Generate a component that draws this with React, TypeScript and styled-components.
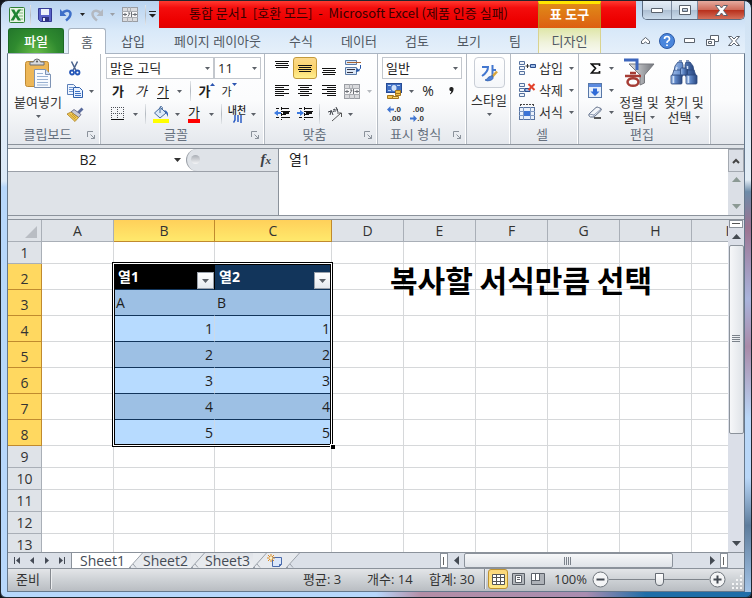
import React from "react";
import styled, { createGlobalStyle, css } from "styled-components";

const Global = createGlobalStyle`
  *, *::before, *::after { box-sizing: border-box; }
  html, body { margin: 0; background: #12161c; }
  body, button, input, select {
    font-family: "Open Sans", "Noto Sans CJK KR", sans-serif;
    font-size: 13px;
    line-height: 16px;
    color: #1e1e1e;
  }
  button { background: none; border: 0; padding: 0; margin: 0; }
  svg { display: block; flex: none; }
`;

/* ---------- window ---------- */

const Frame = styled.main`
  display: flex;
  flex-direction: column;
  min-height: 100vh;
  height: 100vh;
  border: 1px solid #20262e;
  border-radius: 8px 8px 6px 6px;
  overflow: hidden;
  padding: 0 6px 5px;
  background:
    linear-gradient(90deg, #b7d7fb 50%, #b48ea6 56%, #a98db0 78%, #1f6ea8 86%, #1f6ea8) bottom / 100% 5px no-repeat,
    linear-gradient(#cfe2f4, #e3edf6 30%, #6d8ba8 32%, #9b7391 38%, #a9b4dc 50%, #a98aa8 58%, #b9d7f8 70%, #b9d7f8 80%, #5d7c9c 88%, #a9c9ec) right / 6px 100% no-repeat,
    linear-gradient(#b9d3ef 0, #d9e9f9 30px, #e6f0fa 53px, #dbe9f8 180px, #b7d7fb 186px);
`;

const TitleBar = styled.header`
  display: flex;
  height: 27px;
  flex: none;
`;

const QuickAccess = styled.div`
  display: flex;
  align-items: center;
  width: 152px;
  flex: none;
  padding-left: 2px;
`;

const IconButton = styled.button<{ $w?: number; $on?: boolean }>`
  display: flex;
  align-items: center;
  justify-content: center;
  width: ${(p) => p.$w ?? 22}px;
  height: 22px;
  flex: none;
  ${(p) =>
    p.$on &&
    css`
      border: 1px solid #c29a3c;
      border-radius: 3px;
      background: linear-gradient(#fcd98a, #fbd36c 50%, #fff08f);
    `}
`;

const TitleText = styled.h1`
  flex: 1;
  min-width: 0;
  margin: 0;
  overflow: hidden;
  white-space: pre;
  text-align: center;
  font-family: "Noto Sans CJK KR", sans-serif;
  font-size: 13px;
  font-weight: 400;
  line-height: 24px;
  color: #3a0000;
  background: linear-gradient(#ff3a30, #f40d0d 25%, #ee0000 70%, #e00000);
`;

const ContextTitle = styled.div`
  width: 63px;
  flex: none;
  border: solid #b98a1c;
  border-width: 0 1px;
  border-top: 3px solid #ffe500;
  background: linear-gradient(#e08a18, #dd5f12);
  color: #fff;
  font-weight: 700;
  line-height: 20px;
  text-align: center;
`;

const RedTail = styled.div`
  width: 35px;
  flex: none;
  background: linear-gradient(#ff3a30, #f40d0d 25%, #ee0000 70%, #e00000);
`;

const WindowButtons = styled.div`
  display: flex;
  flex: none;
  height: 19px;
  margin-left: 6px;
  border: 1px solid #5b6b80;
  border-top: 0;
  border-radius: 0 0 5px 5px;
  overflow: hidden;
`;

const WindowButton = styled.button<{ $w: number; $close?: boolean }>`
  display: flex;
  align-items: center;
  justify-content: center;
  width: ${(p) => p.$w}px;
  border-right: 1px solid #7c8ba0;
  background: linear-gradient(#e6eef7, #cfdbe8 48%, #adbfd3 52%, #cbdcec);
  ${(p) =>
    p.$close &&
    css`
      border-right: 0;
      background: linear-gradient(#e6ab9f, #cf6c5b 48%, #b8301c 52%, #d5705a);
    `}
`;

const TabBar = styled.nav`
  display: flex;
  height: 25px;
  flex: none;
  padding-left: 1px;
`;

const Tab = styled.button<{ $w: number; $kind?: "file" | "active" | "context" }>`
  width: ${(p) => p.$w}px;
  flex: none;
  white-space: nowrap;
  line-height: 24px;
  color: #505862;
  ${(p) =>
    p.$kind === "file" &&
    css`
      margin-right: 4px;
      border: 1px solid #1c6a24;
      border-bottom: 0;
      border-radius: 3px 3px 0 0;
      background: radial-gradient(ellipse at 50% 110%, #6cc04a, #2f8a2f 60%, #23772b);
      color: #fff;
      font-weight: 500;
    `}
  ${(p) =>
    p.$kind === "active" &&
    css`
      position: relative;
      z-index: 1;
      margin-bottom: -1px;
      border: 1px solid #a9b4c2;
      border-bottom: 0;
      border-radius: 3px 3px 0 0;
      background: #fff;
    `}
  ${(p) =>
    p.$kind === "context" &&
    css`
      margin-left: 3px;
      border: solid #d9d38f;
      border-width: 0 1px;
      background: linear-gradient(#dfe6a8, #f0f3dc 60%, #f8f9f2);
    `}
`;

const TabTools = styled.div`
  display: flex;
  align-items: center;
  margin-left: auto;
`;

const Content = styled.div`
  display: flex;
  flex-direction: column;
  flex: 1;
  min-height: 0;
  border: 1px solid #66788c;
  border-top-color: #a9b4c2;
  background: #dfe3e8;
`;

/* ---------- ribbon ---------- */

const Ribbon = styled.div`
  display: flex;
  height: 91px;
  flex: none;
  overflow: hidden;
  border-bottom: 1px solid #8b929b;
  background: linear-gradient(#fff, #fbfcfd 50%, #e5e8ed);
`;

const Group = styled.section<{ $w: number }>`
  display: flex;
  flex-direction: column;
  width: ${(p) => p.$w}px;
  flex: none;
  padding-top: 3px;
  border-right: 1px solid #b5bbc3;
  box-shadow: inset -1px 0 #fff;
`;

const GroupBody = styled.div<{ $pad?: number }>`
  display: flex;
  height: 69px;
  padding-left: ${(p) => p.$pad ?? 5}px;
`;

const GroupLabel = styled.h2`
  display: flex;
  align-items: center;
  justify-content: center;
  margin: 0;
  padding-right: 5px;
  font-size: 13px;
  font-weight: 400;
  line-height: 17px;
  color: #66707e;

  span { flex: 1; text-align: center; }
`;

const Rows = styled.div<{ $tight?: boolean }>`
  display: flex;
  flex-direction: column;
  gap: ${(p) => (p.$tight ? 0 : 1)}px;
`;

const Row = styled.div`
  display: flex;
  align-items: center;
  height: 22px;
`;

const Divider = styled.span<{ $w: number }>`
  width: ${(p) => p.$w}px;
  height: 20px;
  flex: none;
  background: linear-gradient(#e4e7ea, #b3b9c0, #e4e7ea) center / 1px 100% no-repeat;
`;

const BigButton = styled.button<{ $w: number }>`
  display: flex;
  flex-direction: column;
  align-items: center;
  width: ${(p) => p.$w}px;
  flex: none;
  white-space: nowrap;
  line-height: 15px;
  color: #333;

  > svg:first-child { margin: 1px 0 7px; }
  > svg:last-child { margin-top: 5px; }
`;

const Line = styled.span`
  display: flex;
  align-items: center;
  gap: 4px;
`;

const Mark = styled.span`
  align-self: flex-start;
  padding-top: 3px;
`;

const StyleTile = styled.span`
  display: flex;
  align-items: center;
  justify-content: center;
  width: 31px;
  height: 31px;
  margin-bottom: 5px;
  border: 1px solid #c9ced6;
  border-radius: 4px;
  background: linear-gradient(#fff, #f4f6f9);
`;

const LabelButton = styled.button`
  display: flex;
  align-items: center;
  gap: 3px;
  height: 22px;
  white-space: nowrap;
  color: #333;
`;

const SelectBox = styled.label<{ $w: number }>`
  display: block;
  position: relative;
  width: ${(p) => p.$w}px;
  height: 22px;

  select {
    appearance: none;
    width: 100%;
    height: 22px;
    padding: 0 0 0 3px;
    border: 1px solid #c3c7cd;
    border-radius: 0;
    background: #fff;
    line-height: 18px;
  }
  svg {
    position: absolute;
    right: 4px;
    top: 10px;
    pointer-events: none;
  }
`;

const Ga = styled.span<{ $v?: "bold" | "italic" | "under" | "small" | "color" }>`
  font-size: 13px;
  line-height: 15px;
  ${(p) => p.$v === "bold" && "font-weight: 700;"}
  ${(p) => p.$v === "italic" && "font-style: italic;"}
  ${(p) => p.$v === "under" && "text-decoration: underline; text-underline-offset: 2px;"}
  ${(p) => p.$v === "small" && "font-size: 11px;"}
  ${(p) => p.$v === "color" && "border-bottom: 4px solid #f00; line-height: 14px;"}
`;

const Phonetic = styled.span`
  display: flex;
  flex-direction: column;
  align-items: center;
  font-size: 10px;
  font-weight: 500;
  line-height: 10px;
`;

const Symbol = styled.span`
  font-size: 14px;
  line-height: 16px;
  color: #222;
`;

const Decimal = styled.span`
  display: flex;
  flex-direction: column;
  font-family: "Liberation Sans", sans-serif;
  font-size: 8px;
  font-weight: 700;
  line-height: 9px;
  color: #333;

  > span { display: flex; align-items: center; justify-content: flex-end; }
`;

/* ---------- formula bar ---------- */

const FormulaBar = styled.div`
  display: flex;
  height: 68px;
  flex: none;
  margin-top: 3px;
  border: solid #8b929b;
  border-width: 1px 0;
`;

const NameArea = styled.div`
  width: 271px;
  flex: none;
  border-right: 1px solid #8b929b;
`;

const NameRow = styled.div`
  display: flex;
  height: 23px;
  border-bottom: 1px solid #9ba0a8;
  background: #fff;
`;

const NameInput = styled.input`
  width: 160px;
  padding: 0;
  border: 0;
  background: none;
  font-size: 14px;
  text-align: center;
`;

const FxArea = styled.div`
  display: flex;
  align-items: center;
  justify-content: space-between;
  flex: 1;
  padding: 0 7px 2px 4px;
  border-left: 1px solid #9ba0a8;
  border-radius: 12px 0 0 12px;
  background: #dfe3e8;

  i {
    font-family: "Liberation Serif", serif;
    font-size: 15px;
    font-weight: 700;
    color: #3b3f45;
  }
  small { font-size: 11px; }
`;

const Knob = styled.span`
  width: 9px;
  height: 9px;
  border-radius: 50%;
  background: linear-gradient(#a9aeb5, #f4f5f7);
`;

const FormulaInput = styled.input`
  flex: 1;
  min-width: 0;
  align-self: stretch;
  padding: 0 10px 44px;
  border: 0;
  background: #fff;
  font-size: 14px;
`;

const FormulaScroll = styled.div`
  display: flex;
  flex-direction: column;
  align-items: center;
  justify-content: space-between;
  width: 16px;
  flex: none;
  padding-bottom: 6px;
  background: #dbdfe6;
`;

const ExpandButton = styled.button`
  display: flex;
  align-items: center;
  justify-content: center;
  width: 16px;
  height: 23px;
  margin-bottom: 5px;
  border: 1px solid #a4a9b1;
`;

/* ---------- sheet ---------- */

const SheetArea = styled.div`
  display: flex;
  flex: 1;
  min-height: 0;
  margin-top: 3px;
  border-top: 1px solid #8b929b;
`;

const SheetView = styled.div`
  position: relative;
  flex: 1;
  min-width: 0;
  overflow: hidden;
  background: #fff;
`;

const Grid = styled.table`
  width: 756px;
  table-layout: fixed;
  border-collapse: separate;
  border-spacing: 0;
  font-size: 14px;
  line-height: 18px;
`;

const HeadCell = styled.th<{ $on?: boolean; $row?: boolean }>`
  height: 22px;
  padding: 0;
  overflow: hidden;
  border: solid ${(p) => (p.$on ? "#c08a2e" : "#a9afb7")};
  border-width: 0 1px 1px 0;
  font-weight: 400;
  line-height: 20px;
  text-align: center;
  vertical-align: bottom;
  color: #333;
  background: ${(p) =>
    p.$on ? (p.$row ? "#ffd860" : "linear-gradient(#ffd05a, #ffe96c)") : "#dfe3e8"};
`;

const Corner = styled(HeadCell)`
  svg { margin: 0 4px 3px auto; }
`;

const Cell = styled.td<{ $fill?: string; $num?: boolean; $bold?: boolean }>`
  height: 22px;
  padding: 0 1px 0 2px;
  overflow: hidden;
  border: solid #d6d8da;
  border-width: 0 1px 1px 0;
  white-space: nowrap;
  ${(p) => p.$num && "text-align: right;"}
  ${(p) =>
    p.$fill &&
    css`
      background: ${p.$fill};
      border-bottom-color: #12355b;
      border-right-color: ${p.$fill === "#b7dbff" ? "#cdd9e6" : p.$fill};
    `}
  ${(p) => p.$bold && "color: #fff; font-weight: 700; padding: 0 0 0 4px;"}
`;

const TallRow = styled.tr`
  > * { height: 26px; }
`;

const HeaderContent = styled.div`
  display: flex;
  justify-content: space-between;
  height: 25px;
  padding-top: 4px;
`;

const FilterButton = styled.button`
  display: flex;
  align-items: center;
  justify-content: center;
  width: 17px;
  height: 17px;
  margin-top: 4px;
  border: 1px solid #9aa1ab;
  background: linear-gradient(#fff, #e6e9ee);
`;

const Selection = styled.div`
  position: absolute;
  left: 104px;
  top: 42px;
  width: 221px;
  height: 185px;
  border: 1px solid #000;
  box-shadow: inset 0 0 0 1px #fff, inset 0 0 0 2px #000;
  pointer-events: none;

  &::after {
    content: "";
    position: absolute;
    right: -3px;
    bottom: -3px;
    width: 5px;
    height: 5px;
    border: solid #fff;
    border-width: 1px 0 0 1px;
    background: #000;
  }
`;

const Caption = styled.div`
  position: absolute;
  left: 382px;
  top: 39px;
  font-family: "Noto Sans CJK KR", sans-serif;
  font-size: 30px;
  font-weight: 700;
  line-height: 40px;
  color: #000;
  white-space: nowrap;
`;

const VScroll = styled.div`
  display: flex;
  flex-direction: column;
  align-items: center;
  width: 16px;
  flex: none;
  background: #dbdfe8;
`;

const VTrack = styled.div`
  flex: 1;
  height: 0;
  display: flex;
  flex-direction: column;
`;

const SplitBox = styled.div`
  width: 14px;
  height: 8px;
  padding: 2px;
  border: 1px solid #8b929b;
  background: #fff;
  &::after { content: ""; display: block; border-top: 1px solid #555; }
`;

const ArrowBox = styled.button`
  display: flex;
  align-items: center;
  justify-content: center;
  width: 16px;
  height: 17px;
  flex: none;
`;

const VThumb = styled.div`
  display: flex;
  align-items: center;
  justify-content: center;
  width: 15px;
  height: 65%;
  border: 1px solid #8b929b;
  border-radius: 2px;
  background: linear-gradient(90deg, #f6f7f9, #dfe3e8);
`;

const SheetBar = styled.div`
  display: flex;
  height: 16px;
  flex: none;
  border-top: 1px solid #8b929b;
  background: #dbe0e8;
`;

const NavButtons = styled.div`
  display: flex;
  align-items: center;
  width: 64px;
  flex: none;
  padding-left: 1px;
  border-right: 1px solid #8b929b;

  button { display: flex; justify-content: center; width: 15px; }
`;

const SheetTab = styled.button<{ $active?: boolean }>`
  flex: none;
  width: ${(p) => (p.$active ? 57 : 48)}px;
  padding-left: ${(p) => (p.$active ? 8 : 0)}px;
  font-size: 14px;
  line-height: 14px;
  text-align: left;
  white-space: nowrap;
  color: #444b55;
  background: ${(p) => (p.$active ? "#fff" : "linear-gradient(#e0e3e8, #eef0f3)")};
`;

const NewSheet = styled.button`
  display: flex;
  width: 19px;
  flex: none;
  padding-top: 1px;
  background: #e7eaee;
`;

const HScroll = styled.div`
  display: flex;
  align-items: center;
  width: 288px;
  flex: none;
  margin-left: auto;
  margin-right: 16px;
`;

const SplitBar = styled.span`
  width: 8px;
  height: 15px;
  flex: none;
  padding: 3px 0 0 2px;
  border: 1px solid #8b929b;
  background: #fff;
  &::after { content: ""; display: block; height: 8px; border-left: 1px solid #666; }
`;

const HTrack = styled.div`
  flex: 1;
  height: 15px;
`;

const HThumb = styled.div`
  display: flex;
  align-items: center;
  justify-content: center;
  width: 87%;
  height: 15px;
  border: 1px solid #8b929b;
  border-radius: 2px;
  background: linear-gradient(#f6f7f9, #dfe3e8);
`;

/* ---------- status bar ---------- */

const StatusBar = styled.footer`
  display: flex;
  align-items: center;
  height: 23px;
  flex: none;
  padding: 0 0 2px 8px;
  border-top: 1px solid #8b929b;
  background: linear-gradient(#e3e5e8, #cdd1d5 50%, #b9bdc2);
  white-space: nowrap;
  color: #333;
`;

const StatusSep = styled.span`
  width: 2px;
  height: 20px;
  flex: none;
  border-left: 1px solid #85898f;
  border-right: 1px solid #eceef0;
`;

const Stat = styled.span<{ $w: number }>`
  width: ${(p) => p.$w}px;
  flex: none;
`;

const ViewButtons = styled.div`
  display: flex;
  flex: none;
  margin: 0 6px 0 2px;
`;

const ViewButton = styled.button<{ $on?: boolean }>`
  display: flex;
  align-items: center;
  justify-content: center;
  width: 20px;
  height: 20px;
  flex: none;
  ${(p) =>
    p.$on &&
    css`
      border: 1px solid #bf922f;
      border-radius: 3px;
      background: linear-gradient(#fbd67a, #ffe987);
    `}
`;

const Zoom = styled.input`
  appearance: none;
  width: 100px;
  height: 16px;
  flex: none;
  margin: 0;
  background: linear-gradient(#7f858c, #7f858c) center / 100% 1px no-repeat;

  &::-webkit-slider-thumb {
    appearance: none;
    width: 9px;
    height: 13px;
    border: 1px solid #666c74;
    border-radius: 1px 1px 5px 5px;
    background: linear-gradient(#fff, #e2e4e7);
  }
`;

const Spacer = styled.span`
  flex: 1;
`;

/* ---------- icons ---------- */

type ArrowProps = { dir?: "down" | "up" | "left" | "right"; size?: number; color?: string };

const Arrow = ({ dir = "down", size = 5, color = "#5c6168" }: ArrowProps) => {
  const h = Math.ceil(size / 2);
  const vertical = dir === "down" || dir === "up";
  const d = {
    down: `M0 0H${size}L${size / 2} ${h}Z`,
    up: `M0 ${h}H${size}L${size / 2} 0Z`,
    left: `M${h} 0V${size}L0 ${size / 2}Z`,
    right: `M0 0V${size}L${h} ${size / 2}Z`,
  }[dir];
  return (
    <svg width={vertical ? size : h} height={vertical ? h : size} fill={color}>
      <path d={d} />
    </svg>
  );
};

const DropButton = ({ label, color }: { label: string; color?: string }) => (
  <IconButton $w={10} aria-label={label}>
    <Arrow color={color} />
  </IconButton>
);

const DropArrowBox = styled.span`
  padding-left: 3px;
`;

const DropArrow = () => (
  <DropArrowBox>
    <Arrow />
  </DropArrowBox>
);

const Launcher = () => (
  <svg width="8" height="8" fill="none" stroke="#8b929b">
    <path d="M.5 6V.5H6M3.5 3.5l4 4M7.5 4v3.5H4" />
  </svg>
);

const ExcelIcon = () => (
  <svg width="16" height="16">
    <rect x=".5" y=".5" width="15" height="15" rx="1" fill="#e9f5e4" stroke="#2f8136" />
    <path d="M10 3h4M10 6h4M10 9h4M10 12h4" stroke="#7bb87b" />
    <path d="M2 2.500h3.300L7 5.700 9 2.500h3L8.500 7.800 12 13.500H8.800L6.800 10l-2 3.500H1.500l3.600-5.700Z" fill="#1f8433" />
  </svg>
);

const SaveIcon = () => (
  <svg width="14" height="14">
    <path d="M.5.5h13v13h-11l-2-2Z" fill="#5a63c8" stroke="#343a94" />
    <path d="M3 1h8v6H3Z" fill="#eef2fb" />
    <path d="M4 9h7v4.500H4Z" fill="#2d3180" />
    <path d="M5 10h2v3H5Z" fill="#e6e9f7" />
  </svg>
);

const UndoIcon = ({ color, flip }: { color: string; flip?: boolean }) => (
  <svg width="14" height="14" viewBox="0 0 14 14">
    <g transform={flip ? "matrix(-1 0 0 1 14 0)" : undefined}>
      <path d="M3 5.500C5.500 2.500 10 1.500 11.200 4.500S9.500 10.500 7 12.500" fill="none" stroke={color} strokeWidth="2.500" />
      <path d="M1 1v7h6.500Z" fill={color} />
    </g>
  </svg>
);

const MergeIcon = () => (
  <svg width="16" height="15">
    <rect x=".5" y=".5" width="15" height="14" fill="#d9dadd" stroke="#9a9da3" />
    <path d="M0 4.500h16M0 10.500h16M8.500 0v4M5.500 11v4M10.500 11v4M5.500 0v4" stroke="#aaadb2" />
    <rect x="1" y="5" width="14" height="5" fill="#f7f7f8" />
    <path d="M1 7.500h4M15 7.500h-4M3 6v3M13 6v3M6 6h2L6 9.500M9.500 5v5M9.500 7.500h1" stroke="#6d7076" fill="none" />
  </svg>
);

const PasteIcon = () => (
  <svg width="27" height="30">
    <rect x=".5" y="3.500" width="23" height="25" rx="2" fill="#edb758" stroke="#bf8b35" />
    <path d="M5 7V4h3.500Q9 1 12 1t3.500 3H19v3Z" fill="#d8dade" stroke="#6a6d73" />
    <circle cx="12" cy="3.500" r="1" fill="#555" />
    <path d="M9.500 11.500h11l5 5v13h-16Z" fill="#f8fbff" stroke="#7e94b5" />
    <path d="M20.500 11.500v5h5" fill="#d4e2f3" stroke="#7e94b5" />
    <path d="M12 15.500h6M12 18.500h11M12 21.500h11M12 24.500h11M12 27h11" stroke="#9ab2d2" />
  </svg>
);

const CutIcon = () => (
  <svg width="12" height="15" fill="none">
    <path d="m2.500.5 4.500 9M8.500.5 4 9.500" stroke="#49618c" strokeWidth="1.500" />
    <circle cx="3" cy="11.500" r="2" stroke="#2456b8" strokeWidth="1.800" />
    <circle cx="8.500" cy="11.500" r="2" stroke="#2456b8" strokeWidth="1.800" />
  </svg>
);

const CopyIcon = () => (
  <svg width="16" height="14">
    <path d="M.5.5h6l3 3v7h-9Z" fill="#eef5ff" stroke="#5b7fb8" />
    <path d="M2 3.500h4M2 5.500h4M2 7.500h4" stroke="#6f95d0" />
    <path d="M6.500 3.500h6l3 3v7h-9Z" fill="#e8f1ff" stroke="#2d5eab" />
    <path d="M8 7.500h5M8 9.500h6M8 11.500h6" stroke="#3f73c4" />
  </svg>
);

const BrushIcon = () => (
  <svg width="17" height="15">
    <path d="m10 5 4.500-4.500 2 2L12 7Z" fill="#586a9b" />
    <path d="m7 2.500 7 5-2.500 3L4 5Z" fill="#c9cad6" stroke="#55587a" strokeWidth=".8" />
    <path d="m4 5 7.500 5.500L8 14.500 0 7Z" fill="#f3cb55" stroke="#a87f24" strokeWidth=".8" />
    <path d="m2.500 7 6 5.500M5 7l4 4" stroke="#b98926" strokeWidth=".8" />
  </svg>
);

const BorderIcon = () => (
  <svg width="14" height="14" fill="none" stroke="#4d5158">
    <path d="M.5 0v12M6.500 0v12M12.500 0v12M0 .5h13M0 6.500h13" strokeDasharray="1 1" />
    <path d="M0 12.500h13" stroke="#111" />
  </svg>
);

const FillIcon = () => (
  <svg width="17" height="17">
    <path d="M7.500 1.500 13 7l-6 5-5.500-5Z" fill="#dbe9f9" stroke="#456a9c" />
    <path d="M7 7V1.500Q7 0 8.500.5T9 4" fill="none" stroke="#456a9c" />
    <path d="M11 4q5 1 4 7l-2-4Z" fill="#2f62b4" />
    <path d="M0 13h16v4H0Z" fill="#ff0" />
  </svg>
);

const ALIGN = {
  left: [0, 0],
  center: [0, 2],
  right: [0, 5],
};

const V_OFFSET = { top: 0, middle: 4, bottom: 7 };

const VAlignIcon = ({ at }: { at: "top" | "middle" | "bottom" }) => (
  <svg width="14" height="15" fill="#111">
    {[0, 1, 2, 3].map((i) => (
      <rect key={i} x={i % 2} y={V_OFFSET[at] + i * 2} width={i % 2 ? 12 : 14} height="1" />
    ))}
  </svg>
);

const AlignIcon = ({ kind }: { kind: "left" | "center" | "right" }) => (
  <svg width="14" height="12" fill="#111">
    {[0, 1, 2, 3, 4, 5].map((i) => (
      <rect key={i} x={ALIGN[kind][i % 2]} y={i * 2} width={i % 2 ? 9 : 14} height="1" />
    ))}
  </svg>
);

const IndentIcon = ({ out }: { out?: boolean }) => (
  <svg width="16" height="14">
    <path d="M7 1.500h8M7 4.500h9M7 7.500h5M7 10.500h9M2 1.500h3M2 10.500h3" stroke="#111" />
    <path d="M9 5h6v2H9Z" fill="#111" />
    <path d="M7.500 0v14" stroke="#111" strokeDasharray="1 1" />
    <path d={out ? "M0 6 4 3v2h3v2H4v2Z" : "M7 6 3 3v2H0v2h3v2Z"} fill="#3d7be0" />
  </svg>
);

const WrapIcon = () => (
  <svg width="17" height="16">
    <path d="M.5.5h11v4H.5ZM.5 7.500h11v7H.5Z" fill="#dbe7f6" stroke="#5b7aa6" />
    <path d="M2 2.500h14" stroke="#a86433" />
    <path d="M2 9.500h8M2 12.500h6" stroke="#334" />
    <path d="M15.500 5v3.500L12.500 11" stroke="#2456a8" fill="none" />
    <path d="m11 12 1-4 3 3Z" fill="#2456a8" />
  </svg>
);

const OrientIcon = () => (
  <svg width="17" height="15" fill="none" stroke="#3e4248">
    <path d="m1 5 3-1-1 4M4 3l2 5M5.500 5 7 4M6 3l2-1v3M9 0l2 5M9.500 3 11 2" />
    <path d="m5 14 9-8M10 6h4.500v4" stroke="#555" />
  </svg>
);

const CurrencyIcon = () => (
  <svg width="17" height="16">
    <rect x=".5" y=".5" width="15" height="9" fill="#3f6fc4" stroke="#274b94" />
    <path d="M2 2.500h3M2 7.500h3M11 2.500h3" stroke="#bcd2f4" />
    <ellipse cx="8" cy="5" rx="2.500" ry="3" fill="#cfe0f8" />
    <path d="M9.500 7.500h5v5h-5ZM1.500 12.500h6v3h-6Z" fill="#f2c24a" stroke="#a4761c" />
    <path d="M9 10.500h6M6.500 13.500h6v2h-6Z" stroke="#a4761c" fill="#f9db7c" />
  </svg>
);

const CommaIcon = () => (
  <svg width="5" height="8" fill="#222">
    <path d="M2.500 0A2 2 0 0 1 4.500 2.500Q4.500 5.500 1 7.500V6.500Q2.300 5.500 2.300 4.200A2 2 0 0 1 2.500 0Z" />
  </svg>
);

const BlueArrow = ({ right }: { right?: boolean }) => (
  <svg width="7" height="7">
    <path d={right ? "M7 3.500 3.500 0v2.500H0v2h3.500V7Z" : "M0 3.500 3.500 0v2.500H7v2H3.500V7Z"} fill="#3f74d0" />
  </svg>
);

const StylesIcon = () => (
  <svg width="18" height="18" fill="none">
    <path d="M2 3h6q0 5-6 9M12.500 1v11M12.500 6H16" stroke="#4377cf" strokeWidth="2" />
    <path d="M17 7.500 12 13" stroke="#d8a53b" strokeWidth="2.500" />
    <path d="M12.500 11.500q2 4-2.500 5-3 1-5-.5 3-1 3.500-3Z" fill="#4e82d6" stroke="#2a58a8" strokeWidth=".7" />
  </svg>
);

const CellsIcon = ({ kind }: { kind: "insert" | "delete" | "format" }) =>
  kind === "format" ? (
    <svg width="17" height="16">
      <rect x=".5" y="3.500" width="15" height="12" fill="#eaf1fb" stroke="#56729f" />
      <path d="M0 7.500h16M0 11.500h16M4.500 3v13M11.500 3v13" stroke="#7f9ac4" />
      <rect x="5" y="7" width="6" height="5" fill="#3c74d6" />
      <path d="M1 .5h14M1.500 0v2M14.500 0v2" stroke="#444" strokeDasharray="2 1" />
    </svg>
  ) : (
    <svg width="17" height="14" fill="#eef3fa" stroke="#56729f">
      <path d="M.5.5h5v3h-5ZM.5 5.500h5v3h-5ZM.5 10.500h5v3h-5Z" />
      {kind === "insert" ? (
        <>
          <path d="M11.500 3.500h5v3h-5Z" fill="#9dbbe8" stroke="#2b4d8c" />
          <path d="M6.500 5h4M8.500 3v4" stroke="#333" />
        </>
      ) : (
        <>
          <path d="M6 5.500h5v3H6Z" fill="#9dbbe8" stroke="#2b4d8c" />
          <path d="m9.500 1 6 6M15.500 1l-6 6" stroke="#e2412b" strokeWidth="2" />
        </>
      )}
    </svg>
  );

const SigmaIcon = () => (
  <svg width="11" height="11" fill="none" stroke="#111" strokeWidth="1.700">
    <path d="M9.500 3V1H1.500L5.500 5.200 1.500 10h8V8" />
  </svg>
);

const FillDownIcon = () => (
  <svg width="14" height="15">
    <rect x=".5" y=".5" width="13" height="14" fill="#e6effb" stroke="#5878a8" />
    <path d="M1 1h12v3H1Z" fill="#5b8be0" />
    <path d="M5 5.500h4v3h2.500L7 13 2.500 8.500H5Z" fill="#2f6bd8" />
  </svg>
);

const EraserIcon = () => (
  <svg width="15" height="13">
    <path d="M1 8 8 1.500q1-1 2.500 0l2.500 1q1 1 0 2L6 11H2.500Q0 10 1 8Z" fill="#f3f5f9" stroke="#5e6c86" />
    <path d="m1 8 5 1 7-6M6 9v2" fill="none" stroke="#8b98b1" />
    <path d="M6 12h7" stroke="#222" strokeWidth="1.300" />
  </svg>
);

const SortIcon = () => (
  <svg width="31" height="30" fill="none">
    <defs>
      <linearGradient id="funnel">
        <stop offset="0" stopColor="#e4e5e7" />
        <stop offset="1" stopColor="#72757b" />
      </linearGradient>
    </defs>
    <path d="M5 6h25L20.500 17v8L16 27V17Z" fill="url(#funnel)" stroke="#77797e" />
    <path d="M0 2h13v10" stroke="#3d66bd" strokeWidth="3" />
    <path d="M6 15h6M1 18h16" stroke="#a63d35" strokeWidth="2.500" />
    <ellipse cx="9" cy="24" rx="5.500" ry="3.800" stroke="#a63d35" strokeWidth="2.500" />
  </svg>
);

const FindIcon = () => (
  <svg width="28" height="30">
    <defs>
      <linearGradient id="lens">
        <stop offset="0" stopColor="#9dbbe8" />
        <stop offset=".4" stopColor="#6088c8" />
        <stop offset="1" stopColor="#28467f" />
      </linearGradient>
    </defs>
    <g fill="url(#lens)" stroke="#2b477c" strokeWidth=".8">
      <path d="M8 4h4l1 3v6H4l1-5ZM16 4h4l3 4 1 5h-9V7Z" />
      <path d="M4 12h9v6H2ZM15 12h9l2 6H15Z" />
      <rect x="10.500" y="10" width="7" height="7" rx="1" />
      <rect x="1" y="17" width="11" height="9" rx="1" />
      <rect x="16" y="17" width="11" height="9" rx="1" />
    </g>
    <path d="M9 3h3M16 3h3" stroke="#7d93bb" strokeWidth="2" />
    <path d="M3.500 18v7M18.500 18v7M7 9l-1 3M17.500 8v3" stroke="#cfe0f8" strokeWidth="1.500" />
  </svg>
);

const HelpIcon = () => (
  <svg width="16" height="16">
    <circle cx="8" cy="8" r="7.500" fill="#4a86dc" stroke="#2c5aa6" />
    <path d="M5.500 6Q5.500 3.500 8 3.500T10.500 6Q10.500 7.200 9 8 8 8.500 8 10M8 11.500v1.500" fill="none" stroke="#fff" strokeWidth="1.700" />
  </svg>
);

const GrayGlyph = ({ d, w, h }: { d: string; w: number; h: number }) => (
  <svg width={w} height={h} fill="#fff" stroke="#5a626d">
    <path d={d} />
  </svg>
);

const Slant = ({ left, right }: { left: string; right: string }) => (
  <svg width="14" height="15">
    <path d="M0 0h14L1 15H0Z" fill={left} />
    <path d="M14 0v15H1Z" fill={right} />
    <path d="M13.500 0 .5 14.500H0M0 14.500h2M4 11l3 3.500" stroke="#9aa0a9" fill="none" />
  </svg>
);

const NewSheetIcon = () => (
  <svg width="16" height="13">
    <path d="M5.500 3.500h9v7l-2 2h-7Z" fill="#dbe7fa" stroke="#4a6bac" />
    <path d="M12.500 12.500v-2h2" fill="#4a6bac" stroke="#4a6bac" />
    <path d="M4 0v8M0 4h8M1 1l6 6M7 1 1 7" stroke="#dc8b22" />
    <circle cx="4" cy="4" r="1.500" fill="#fff3c4" />
  </svg>
);

const Grip = ({ vertical }: { vertical?: boolean }) => (
  <svg width="8" height="8" stroke="#7b828b">
    <path d={vertical ? "M0 .5h8M0 2.500h8M0 4.500h8M0 6.500h8" : "M.5 0v8M2.500 0v8M4.500 0v8M6.500 0v8"} />
  </svg>
);

const RoundIcon = ({ plus }: { plus?: boolean }) => (
  <svg width="17" height="17">
    <circle cx="8.500" cy="8.500" r="7.500" fill="#f4f5f6" stroke="#6e747b" />
    <path d={plus ? "M4.500 8.500h8M8.500 4.500v8" : "M4.500 8.500h8"} stroke="#444a52" strokeWidth="2" />
  </svg>
);

const ResizeGrip = () => (
  <svg width="18" height="20" fill="#f4f5f6">
    <path d="M14 6h2v2h-2ZM10 10h2v2h-2ZM14 10h2v2h-2ZM6 14h2v2H6ZM10 14h2v2h-2ZM14 14h2v2h-2ZM6 18h2v2H6ZM10 18h2v2h-2ZM14 18h2v2h-2Z" />
  </svg>
);

/* ---------- data ---------- */

const COLUMNS = ["A", "B", "C", "D", "E", "F", "G", "H", "I"];
const WIDTHS: Record<string, number> = { B: 101, C: 117 };
const TABS: [string, number][] = [
  ["삽입", 54],
  ["페이지 레이아웃", 115],
  ["수식", 52],
  ["데이터", 64],
  ["검토", 52],
  ["보기", 52],
  ["팀", 40],
];
const DATA: Record<number, [string, string]> = {
  2: ["열1", "열2"],
  3: ["A", "B"],
  4: ["1", "1"],
  5: ["2", "2"],
  6: ["3", "3"],
  7: ["4", "4"],
  8: ["5", "5"],
};
const ROWS = Array.from({ length: 13 }, (_, i) => i + 1);

const DataCell = ({ row, col }: { row: number; col: string }) => {
  const values = DATA[row];
  if (!values || (col !== "B" && col !== "C")) return <Cell />;
  const value = values[col === "B" ? 0 : 1];
  if (row === 2)
    return (
      <Cell $bold $fill={col === "B" ? "#000" : "#12355b"}>
        <HeaderContent>
          {value}
          <FilterButton aria-label={`${value} 필터`}>
            <Arrow size={7} />
          </FilterButton>
        </HeaderContent>
      </Cell>
    );
  return (
    <Cell $num={row > 3} $fill={row % 2 ? "#9dc0e4" : "#b7dbff"}>
      {value}
    </Cell>
  );
};

const SheetRow = ({ row }: { row: number }) => {
  const filled = row in DATA;
  const cells = (
    <>
      <HeadCell $row $on={filled}>{row}</HeadCell>
      {COLUMNS.map((c) => (
        <DataCell key={c} row={row} col={c} />
      ))}
    </>
  );
  return filled ? <TallRow>{cells}</TallRow> : <tr>{cells}</tr>;
};

const Label = ({ text, launcher }: { text: string; launcher?: boolean }) => (
  <GroupLabel>
    <span>{text}</span>
    {launcher && <Launcher />}
  </GroupLabel>
);

const Combo = ({ label, value, w }: { label: string; value: string; w: number }) => (
  <SelectBox $w={w}>
    <select aria-label={label} defaultValue={value}>
      <option>{value}</option>
    </select>
    <Arrow />
  </SelectBox>
);

export default function App() {
  return (
    <>
      <Global />
      <Frame>
        <TitleBar>
          <QuickAccess>
            <ExcelIcon />
            <Divider $w={10} />
            <IconButton $w={20} aria-label="저장"><SaveIcon /></IconButton>
            <IconButton aria-label="실행 취소"><UndoIcon color="#3e6fc8" /></IconButton>
            <DropButton label="실행 취소 목록" color="#222" />
            <IconButton $w={20} aria-label="다시 실행"><UndoIcon color="#b3b8c0" flip /></IconButton>
            <DropButton label="다시 실행 목록" color="#9a9fa6" />
            <IconButton $w={26} aria-label="병합"><MergeIcon /></IconButton>
            <Divider $w={4} />
            <IconButton $w={11} aria-label="빠른 실행 도구 모음 사용자 지정">
              <svg width="7" height="7" fill="#222"><path d="M0 0h7v1H0ZM0 3h7L3.500 6.500Z" /></svg>
            </IconButton>
          </QuickAccess>
          <TitleText>{"통합 문서1  [호환 모드]  -  Microsoft Excel (제품 인증 실패)"}</TitleText>
          <ContextTitle>표 도구</ContextTitle>
          <RedTail />
          <WindowButtons>
            <WindowButton $w={29} aria-label="최소화">
              <GrayGlyph w={12} h={5} d="M.5.5h11v4H.5Z" />
            </WindowButton>
            <WindowButton $w={26} aria-label="최대화">
              <GrayGlyph w={12} h={10} d="M.5.5h11v9H.5ZM3.500 3.500v3h5v-3Z" />
            </WindowButton>
            <WindowButton $w={46} $close aria-label="닫기">
              <GrayGlyph w={13} h={11} d="M.5.5h4l2 2.500 2-2.500h4l-4 5 4 5h-4l-2-2.500-2 2.500h-4l4-5Z" />
            </WindowButton>
          </WindowButtons>
        </TitleBar>

        <TabBar>
          <Tab $w={56} $kind="file">파일</Tab>
          <Tab $w={38} $kind="active">홈</Tab>
          {TABS.map(([name, w]) => (
            <Tab key={name} $w={w}>{name}</Tab>
          ))}
          <Tab $w={63} $kind="context">디자인</Tab>
          <TabTools>
            <IconButton aria-label="리본 메뉴 최소화">
              <GrayGlyph w={9} h={7} d="m.5 4 4-3.500 4 3.500v2.500h-2L4.500 5l-2 1.500h-2Z" />
            </IconButton>
            <IconButton aria-label="도움말"><HelpIcon /></IconButton>
            <IconButton $w={23} aria-label="창 최소화">
              <GrayGlyph w={11} h={5} d="M.5.5h10v4H.5Z" />
            </IconButton>
            <IconButton aria-label="창 복원">
              <GrayGlyph w={13} h={11} d="M4.500.5h8v6h-4v4h-8v-6h4ZM4.500 4.500h4v2M2.500 6.500h3v2h-3Z" />
            </IconButton>
            <IconButton aria-label="창 닫기">
              <GrayGlyph w={12} h={10} d="M.5.5h3l2.500 2.500L8.500.5h3l-4 4.500 4 4.500h-3L6 7 3.500 9.500h-3l4-4.500Z" />
            </IconButton>
          </TabTools>
        </TabBar>

        <Content>
          <Ribbon>
            <Group $w={93}>
              <GroupBody $pad={4}>
                <BigButton $w={52}>
                  <PasteIcon />
                  붙여넣기
                  <Arrow />
                </BigButton>
                <Rows>
                  <Row><IconButton aria-label="잘라내기"><CutIcon /></IconButton></Row>
                  <Row>
                    <IconButton aria-label="복사"><CopyIcon /></IconButton>
                    <DropButton label="복사 옵션" />
                  </Row>
                  <Row><IconButton aria-label="서식 복사"><BrushIcon /></IconButton></Row>
                </Rows>
              </GroupBody>
              <Label text="클립보드" launcher />
            </Group>

            <Group $w={164}>
              <GroupBody>
                <Rows>
                  <Row>
                    <Combo label="글꼴" value="맑은 고딕" w={108} />
                    <Combo label="글꼴 크기" value="11" w={47} />
                  </Row>
                  <Row>
                    <IconButton $w={24} aria-label="굵게"><Ga $v="bold">가</Ga></IconButton>
                    <IconButton aria-label="기울임꼴"><Ga $v="italic">가</Ga></IconButton>
                    <IconButton aria-label="밑줄"><Ga $v="under">가</Ga></IconButton>
                    <DropButton label="밑줄 옵션" />
                    <Divider $w={12} />
                    <IconButton aria-label="글꼴 크기 크게">
                      <Ga $v="bold">가</Ga><Mark><Arrow dir="up" color="#2c55b0" /></Mark>
                    </IconButton>
                    <IconButton aria-label="글꼴 크기 작게">
                      <Ga $v="small">가</Ga><Mark><Arrow color="#2c55b0" /></Mark>
                    </IconButton>
                  </Row>
                  <Row>
                    <IconButton $w={24} aria-label="테두리"><BorderIcon /></IconButton>
                    <DropButton label="테두리 옵션" />
                    <Divider $w={10} />
                    <IconButton aria-label="채우기 색"><FillIcon /></IconButton>
                    <DropButton label="채우기 색 옵션" />
                    <IconButton $w={24} aria-label="글꼴 색"><Ga $v="color">가</Ga></IconButton>
                    <DropButton label="글꼴 색 옵션" />
                    <Divider $w={10} />
                    <IconButton aria-label="윗주">
                      <Phonetic>
                        내천
                        <svg width="9" height="8" fill="none" stroke="#2b5cc4" strokeWidth="1.500">
                          <path d="M2 0v5L.5 7.500M5 0v7M8 0v8" />
                        </svg>
                      </Phonetic>
                    </IconButton>
                    <DropButton label="윗주 옵션" />
                  </Row>
                </Rows>
              </GroupBody>
              <Label text="글꼴" launcher />
            </Group>

            <Group $w={113}>
              <GroupBody>
                <Rows>
                  <Row>
                    <IconButton $w={23} aria-label="위쪽 맞춤"><VAlignIcon at="top" /></IconButton>
                    <IconButton $w={24} $on aria-label="가운데 맞춤"><VAlignIcon at="middle" /></IconButton>
                    <IconButton $w={23} aria-label="아래쪽 맞춤"><VAlignIcon at="bottom" /></IconButton>
                    <IconButton $w={26} aria-label="텍스트 줄 바꿈"><WrapIcon /></IconButton>
                  </Row>
                  <Row>
                    <IconButton $w={23} aria-label="왼쪽"><AlignIcon kind="left" /></IconButton>
                    <IconButton $w={24} aria-label="가운데"><AlignIcon kind="center" /></IconButton>
                    <IconButton $w={23} aria-label="오른쪽"><AlignIcon kind="right" /></IconButton>
                    <IconButton $w={24} aria-label="병합하고 가운데 맞춤"><MergeIcon /></IconButton>
                    <DropButton label="병합 옵션" color="#b5b9be" />
                  </Row>
                  <Row>
                    <IconButton $w={23} aria-label="내어쓰기"><IndentIcon out /></IconButton>
                    <IconButton $w={23} aria-label="들여쓰기"><IndentIcon /></IconButton>
                    <Divider $w={6} />
                    <IconButton $w={26} aria-label="방향"><OrientIcon /></IconButton>
                    <Arrow />
                  </Row>
                </Rows>
              </GroupBody>
              <Label text="맞춤" launcher />
            </Group>

            <Group $w={89}>
              <GroupBody $pad={4}>
                <Rows>
                  <Row><Combo label="표시 형식" value="일반" w={80} /></Row>
                  <Row>
                    <IconButton $w={24} aria-label="회계 표시 형식"><CurrencyIcon /></IconButton>
                    <DropButton label="회계 옵션" />
                    <IconButton $w={24} aria-label="백분율"><Symbol>%</Symbol></IconButton>
                    <IconButton aria-label="쉼표"><CommaIcon /></IconButton>
                  </Row>
                  <Row>
                    <IconButton $w={24} aria-label="자릿수 늘림">
                      <Decimal><span><BlueArrow />.0</span><span>.00</span></Decimal>
                    </IconButton>
                    <IconButton aria-label="자릿수 줄임">
                      <Decimal><span>.00</span><span><BlueArrow right />.0</span></Decimal>
                    </IconButton>
                  </Row>
                </Rows>
              </GroupBody>
              <Label text="표시 형식" launcher />
            </Group>

            <Group $w={44}>
              <GroupBody $pad={2}>
                <BigButton $w={40}>
                  <StyleTile><StylesIcon /></StyleTile>
                  스타일
                  <Arrow />
                </BigButton>
              </GroupBody>
            </Group>

            <Group $w={68}>
              <GroupBody $pad={8}>
                <Rows $tight>
                  <LabelButton><CellsIcon kind="insert" />삽입<DropArrow /></LabelButton>
                  <LabelButton><CellsIcon kind="delete" />삭제<DropArrow /></LabelButton>
                  <LabelButton><CellsIcon kind="format" />서식<DropArrow /></LabelButton>
                </Rows>
              </GroupBody>
              <Label text="셀" />
            </Group>

            <Group $w={132}>
              <GroupBody>
                <Rows $tight>
                  <Row><IconButton aria-label="합계"><SigmaIcon /></IconButton><DropButton label="합계 옵션" /></Row>
                  <Row><IconButton aria-label="채우기"><FillDownIcon /></IconButton><DropButton label="채우기 옵션" /></Row>
                  <Row><IconButton aria-label="지우기"><EraserIcon /></IconButton><DropButton label="지우기 옵션" /></Row>
                </Rows>
                <BigButton $w={46}>
                  <SortIcon />
                  <span>정렬 및</span>
                  <Line>필터 <Arrow /></Line>
                </BigButton>
                <BigButton $w={44}>
                  <FindIcon />
                  <span>찾기 및</span>
                  <Line>선택 <Arrow /></Line>
                </BigButton>
              </GroupBody>
              <Label text="편집" />
            </Group>
          </Ribbon>

          <FormulaBar>
            <NameArea>
              <NameRow>
                <NameInput aria-label="이름 상자" defaultValue="B2" />
                <IconButton $w={18} aria-label="이름 목록"><Arrow size={7} color="#333" /></IconButton>
                <FxArea><Knob /><i>f<small>x</small></i></FxArea>
              </NameRow>
            </NameArea>
            <FormulaInput aria-label="수식 입력줄" defaultValue="열1" />
            <FormulaScroll>
              <ExpandButton aria-label="수식 입력줄 축소">
                <svg width="8" height="6" fill="none" stroke="#444" strokeWidth="2"><path d="m1 5 3-3 3 3" /></svg>
              </ExpandButton>
              <Arrow dir="up" size={9} color="#8b9994" />
              <Spacer />
              <Arrow size={9} color="#8b9994" />
            </FormulaScroll>
          </FormulaBar>

          <SheetArea>
            <SheetView>
              <Grid>
                <colgroup>
                  <col width="34" />
                  {COLUMNS.map((c) => (
                    <col key={c} width={WIDTHS[c] ?? 72} />
                  ))}
                </colgroup>
                <thead>
                  <tr>
                    <Corner>
                      <svg width="12" height="12" fill="#b9bdc3"><path d="M12 0v12H0Z" /></svg>
                    </Corner>
                    {COLUMNS.map((c) => (
                      <HeadCell key={c} $on={c === "B" || c === "C"}>{c}</HeadCell>
                    ))}
                  </tr>
                </thead>
                <tbody>
                  {ROWS.map((r) => (
                    <SheetRow key={r} row={r} />
                  ))}
                </tbody>
              </Grid>
              <Selection />
              <Caption>복사할 서식만큼 선택</Caption>
            </SheetView>
            <VScroll>
              <SplitBox />
              <ArrowBox aria-label="위로"><Arrow dir="up" size={9} color="#444a52" /></ArrowBox>
              <VTrack>
                <VThumb><Grip vertical /></VThumb>
              </VTrack>
              <ArrowBox aria-label="아래로"><Arrow size={9} color="#444a52" /></ArrowBox>
            </VScroll>
          </SheetArea>

          <SheetBar>
            <NavButtons>
              <button aria-label="첫 시트"><svg width="6" height="7" fill="#444a55"><path d="M0 0h1v7H0ZM6 0v7L2 3.500Z" /></svg></button>
              <button aria-label="이전 시트"><Arrow dir="left" size={7} color="#444a55" /></button>
              <button aria-label="다음 시트"><Arrow dir="right" size={7} color="#444a55" /></button>
              <button aria-label="마지막 시트"><svg width="6" height="7" fill="#444a55"><path d="M5 0h1v7H5ZM0 0v7l4-3.500Z" /></svg></button>
            </NavButtons>
            <SheetTab $active>Sheet1</SheetTab>
            <Slant left="#fff" right="#e7eaee" />
            <SheetTab>Sheet2</SheetTab>
            <Slant left="#e7eaee" right="#e7eaee" />
            <SheetTab>Sheet3</SheetTab>
            <Slant left="#e7eaee" right="#e7eaee" />
            <NewSheet aria-label="워크시트 삽입"><NewSheetIcon /></NewSheet>
            <Slant left="#e7eaee" right="#dbe0e8" />
            <HScroll>
              <SplitBar />
              <ArrowBox aria-label="왼쪽으로"><Arrow dir="left" size={9} color="#444a52" /></ArrowBox>
              <HTrack><HThumb><Grip /></HThumb></HTrack>
              <ArrowBox aria-label="오른쪽으로"><Arrow dir="right" size={9} color="#444a52" /></ArrowBox>
              <SplitBar />
            </HScroll>
          </SheetBar>

          <StatusBar>
            <Stat $w={34}>준비</Stat>
            <StatusSep />
            <Spacer />
            <Stat $w={64}>평균: 3</Stat>
            <Stat $w={62}>개수: 14</Stat>
            <Stat $w={55}>합계: 30</Stat>
            <StatusSep />
            <ViewButtons>
              <ViewButton $on aria-label="기본">
                <svg width="13" height="11" fill="#fff" stroke="#555"><path d="M.5.5h12v10H.5ZM0 3.500h13M0 7.500h13M4.500 0v11M8.500 0v11" /></svg>
              </ViewButton>
              <ViewButton aria-label="페이지 레이아웃">
                <svg width="13" height="12" fill="#b4b8bd" stroke="#5b6068"><path d="M.5.5h12v11H.5Z" /><path d="M3.500 2.500h6v7h-6Z" fill="#fff" /><path d="M5 4.500h3M5 6.500h3" /></svg>
              </ViewButton>
              <ViewButton aria-label="페이지 나누기 미리 보기">
                <svg width="14" height="12" fill="#aeb2b8" stroke="#5b6068"><path d="M.5.5h13v11H.5Z" /><path d="M1 1h3v6H1ZM5 1h3v6H5Z" fill="#fff" stroke="none" /><path d="M4.500 1v6M1 7.500h8M8.500 1v7" /></svg>
              </ViewButton>
            </ViewButtons>
            <Stat $w={38}>100%</Stat>
            <IconButton $w={17} aria-label="축소"><RoundIcon /></IconButton>
            <Zoom type="range" min={0} max={100} defaultValue={50} aria-label="확대/축소" />
            <IconButton $w={17} aria-label="확대"><RoundIcon plus /></IconButton>
            <ResizeGrip />
          </StatusBar>
        </Content>
      </Frame>
    </>
  );
}
